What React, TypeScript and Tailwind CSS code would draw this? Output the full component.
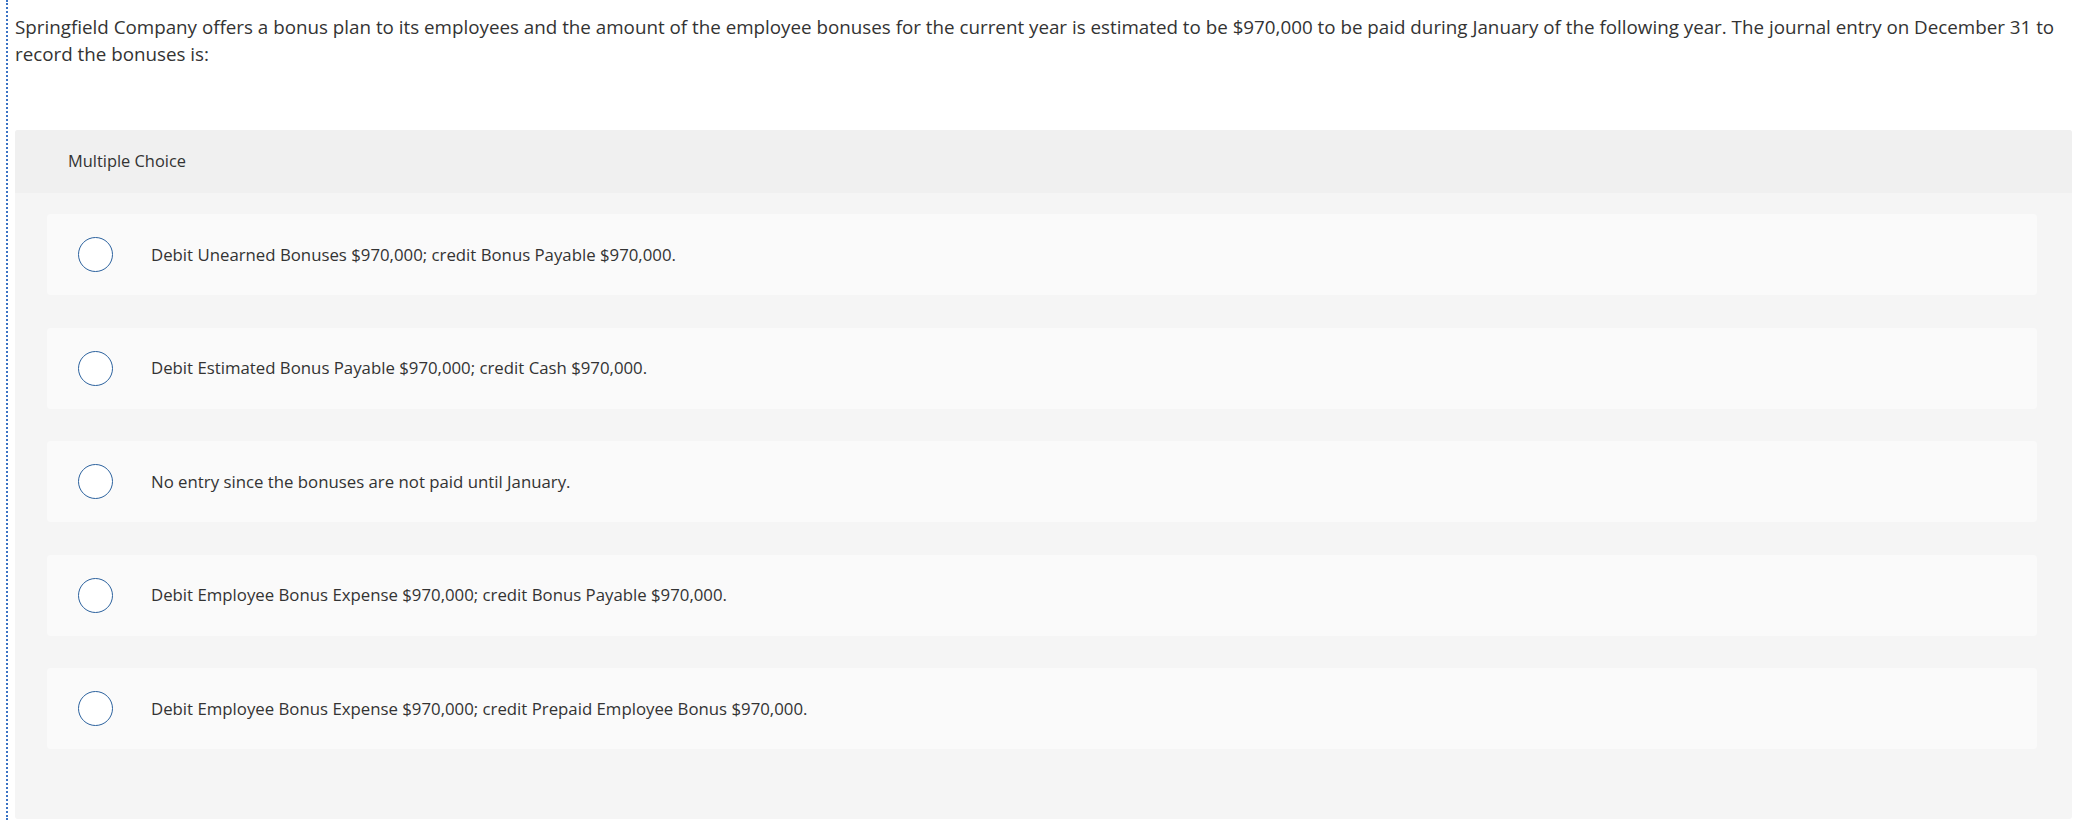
const OPTIONS = [
  'Debit Unearned Bonuses $970,000; credit Bonus Payable $970,000.',
  'Debit Estimated Bonus Payable $970,000; credit Cash $970,000.',
  'No entry since the bonuses are not paid until January.',
  'Debit Employee Bonus Expense $970,000; credit Bonus Payable $970,000.',
  'Debit Employee Bonus Expense $970,000; credit Prepaid Employee Bonus $970,000.',
]

export default function App() {
  return (
    <div className="min-h-[820px] bg-white font-['Open_Sans',sans-serif] text-[#333]">
      <div className="ml-[6px] min-h-[820px] border-l-2 border-dotted border-[#3b73c4] pl-[7px] pr-[14px]">
        <p className="pt-[14px] text-[18.8px] leading-[27px]">
          Springfield Company offers a bonus plan to its employees and the amount of the employee bonuses for the
          current year is estimated to be $970,000 to be paid during January of the following year. The journal entry
          on December 31 to record the bonuses is:
        </p>

        <section className="mt-[62px] overflow-hidden rounded-[3px] bg-[#f5f5f5]">
          <div className="flex h-[63px] items-center bg-[#f0f0f0] pl-[53px] text-[16.4px]">Multiple Choice</div>
          <div className="flex flex-col gap-[32.5px] pt-[21px] pb-[70px] pl-[32px] pr-[35px]">
            {OPTIONS.map((text) => (
              <label key={text} className="flex h-[81px] items-center rounded-[4px] bg-[#fafafa] pl-[31px]">
                <span className="h-[35px] w-[35px] shrink-0 rounded-full border-[1.5px] border-[#2c629e] bg-white" />
                <span className="ml-[38px] text-[16.8px]">{text}</span>
              </label>
            ))}
          </div>
        </section>
      </div>
    </div>
  )
}
